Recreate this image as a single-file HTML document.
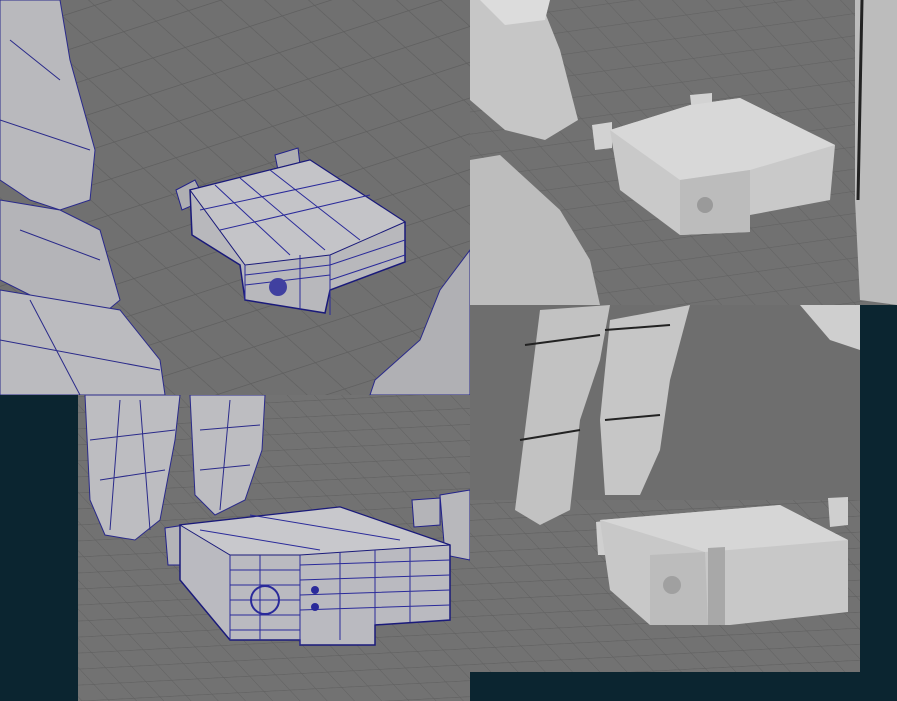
<!DOCTYPE html>
<html><head><meta charset="utf-8"><style>
html,body{margin:0;padding:0;background:#0b2530;width:897px;height:701px;overflow:hidden}
svg{display:block}
</style></head><body>
<svg width="897" height="701" viewBox="0 0 897 701" xmlns="http://www.w3.org/2000/svg">
<defs>
<clipPath id="c1"><rect x="0" y="0" width="470" height="395"/></clipPath>
<clipPath id="c2"><rect x="470" y="0" width="427" height="305"/></clipPath>
<clipPath id="c3"><rect x="78" y="395" width="392" height="306"/></clipPath>
<clipPath id="c4"><rect x="470" y="305" width="390" height="367"/></clipPath>
<pattern id="g1" width="34" height="34" patternUnits="userSpaceOnUse" patternTransform="rotate(-18) skewX(30)">
<rect width="34" height="34" fill="#707070"/><path d="M0 0H34M0 0V34" stroke="#5f5f5f" stroke-width="1.5"/></pattern>
<pattern id="g2" width="30" height="22" patternUnits="userSpaceOnUse" patternTransform="rotate(-8) skewX(35)">
<rect width="30" height="22" fill="#717171"/><path d="M0 0H30M0 0V22" stroke="#626262" stroke-width="1.3"/></pattern>
<pattern id="g3" width="26" height="16" patternUnits="userSpaceOnUse" patternTransform="rotate(-3) skewX(40)">
<rect width="26" height="16" fill="#727272"/><path d="M0 0H26M0 0V16" stroke="#606060" stroke-width="1.2"/></pattern>
</defs>
<rect width="897" height="701" fill="#0b2530"/>

<!-- TL -->
<g clip-path="url(#c1)">
<rect x="0" y="0" width="470" height="395" fill="url(#g1)"/>
<polygon points="0,0 60,0 70,60 95,150 90,200 60,210 30,200 0,180" fill="#b9b9bd" stroke="#2a2a8a"/>
<polygon points="0,200 60,210 100,230 120,300 90,325 40,300 0,280" fill="#b4b4b8" stroke="#2a2a8a"/>
<polygon points="0,290 120,310 160,360 165,395 0,395" fill="#bbbbbf" stroke="#2a2a8a"/>
<path d="M10 40L60 80M0 120L90 150M20 230L100 260M0 340L160 370M30 300L80 395" stroke="#2a2a8a"/>
<polygon points="176,190 195,180 205,200 182,210" fill="#aeaeb2" stroke="#22228a"/>
<polygon points="275,155 298,148 300,165 278,170" fill="#aeaeb2" stroke="#22228a"/>
<polygon points="190,190 310,160 405,222 405,262 330,290 325,313 245,300 240,265 192,235" fill="#b8b8bc" stroke="#1a1a7a" stroke-width="1.5"/>
<polygon points="190,190 310,160 405,222 330,255 245,265" fill="#c4c4c8" stroke="#1a1a7a"/>
<path d="M215 185L290 255M240 178L325 250M270 170L360 240M200 210L340 180M220 230L370 195M245 265V300M300 255V310M330 255V315M245 275L330 265M245 285L330 275M330 265L405 240M330 280L405 255" stroke="#2a2a9a"/>
<circle cx="278" cy="287" r="9" fill="#4040a0"/>
<polygon points="470,250 440,290 420,340 375,380 370,395 470,395" fill="#b0b0b4" stroke="#2a2a8a"/>
</g>

<!-- TR -->
<g clip-path="url(#c2)">
<rect x="470" y="0" width="427" height="305" fill="url(#g2)"/>
<polygon points="470,0 540,0 560,50 578,120 545,140 505,130 470,100" fill="#c6c6c6"/>
<polygon points="480,0 550,0 545,20 505,25" fill="#dcdcdc"/>
<polygon points="470,160 500,155 560,210 590,260 600,305 470,305" fill="#bdbdbd"/>
<polygon points="592,125 612,122 612,148 595,150" fill="#d2d2d2"/>
<polygon points="690,95 712,93 712,110 692,112" fill="#d2d2d2"/>
<polygon points="610,130 690,105 740,98 835,145 830,200 750,215 750,232 680,235 620,190" fill="#c9c9c9"/>
<polygon points="610,130 690,105 740,98 835,145 750,170 680,180" fill="#d8d8d8"/>
<polygon points="680,180 750,170 750,232 680,235" fill="#bcbcbc"/>
<circle cx="705" cy="205" r="8" fill="#9a9a9a"/>
<polygon points="855,0 897,0 897,305 860,300 855,200" fill="#bcbcbc"/>
<path d="M862 0L858 200" stroke="#222" stroke-width="3"/>
</g>

<!-- BL -->
<g clip-path="url(#c3)">
<rect x="78" y="395" width="392" height="306" fill="url(#g3)"/>
<polygon points="85,395 180,395 175,440 160,520 135,540 105,535 90,500" fill="#bdbdc1" stroke="#2a2a8a"/>
<polygon points="190,395 265,395 262,450 245,500 215,515 195,495" fill="#bdbdc1" stroke="#2a2a8a"/>
<path d="M90 440L175 430M100 480L165 470M200 430L260 425M200 470L250 465M120 400L110 530M140 400L150 530M230 400L220 510" stroke="#2a2a8a"/>
<polygon points="412,500 440,498 440,525 414,527" fill="#b4b4b8" stroke="#22228a"/>
<polygon points="440,495 470,490 470,560 445,555" fill="#b8b8bc" stroke="#22228a"/>
<polygon points="165,528 185,525 185,565 168,565" fill="#b4b4b8" stroke="#22228a"/>
<polygon points="180,525 340,507 450,545 450,620 375,625 375,645 300,645 300,640 230,640 180,580" fill="#babac0" stroke="#1a1a7a" stroke-width="1.5"/>
<polygon points="180,525 340,507 450,545 300,555 230,555" fill="#c8c8cc" stroke="#1a1a7a"/>
<path d="M230 555V640M300 555V645M375 550V625M230 570H300M230 585H300M230 600H300M230 615H300M230 630H300M300 565L450 560M300 580L450 575M300 595L450 590M300 610L450 605M260 555V640M340 552V640M410 548V622M200 530L320 550M250 515L400 540" stroke="#2a2a9a"/>
<circle cx="265" cy="600" r="14" fill="none" stroke="#2a2a9a" stroke-width="2"/>
<circle cx="315" cy="590" r="4" fill="#2a2a9a"/><circle cx="315" cy="607" r="4" fill="#2a2a9a"/>
</g>

<!-- BR -->
<g clip-path="url(#c4)">
<rect x="470" y="305" width="390" height="367" fill="url(#g3)"/>
<rect x="470" y="305" width="390" height="195" fill="#6e6e6e"/>
<polygon points="540,310 610,305 600,360 580,420 570,510 540,525 515,510 525,430" fill="#c2c2c2"/>
<polygon points="610,320 690,305 670,380 660,450 640,495 605,495 600,420" fill="#c6c6c6"/>
<path d="M525 345L600 335M520 440L580 430M605 330L670 325M605 420L660 415" stroke="#222" stroke-width="2"/>
<polygon points="800,305 860,305 860,350 830,340" fill="#cfcfcf"/>
<polygon points="828,498 848,497 848,525 830,527" fill="#cfcfcf"/>
<polygon points="596,522 610,520 610,555 598,555" fill="#cfcfcf"/>
<polygon points="600,520 780,505 848,540 848,612 730,625 710,625 650,625 610,590" fill="#c8c8c8"/>
<polygon points="600,520 780,505 848,540 705,552" fill="#d6d6d6"/>
<polygon points="650,555 705,552 708,625 650,625" fill="#bcbcbc"/>
<polygon points="708,548 725,547 725,625 708,625" fill="#a8a8a8"/>
<circle cx="672" cy="585" r="9" fill="#a0a0a0"/>
</g>
</svg>
</body></html>
